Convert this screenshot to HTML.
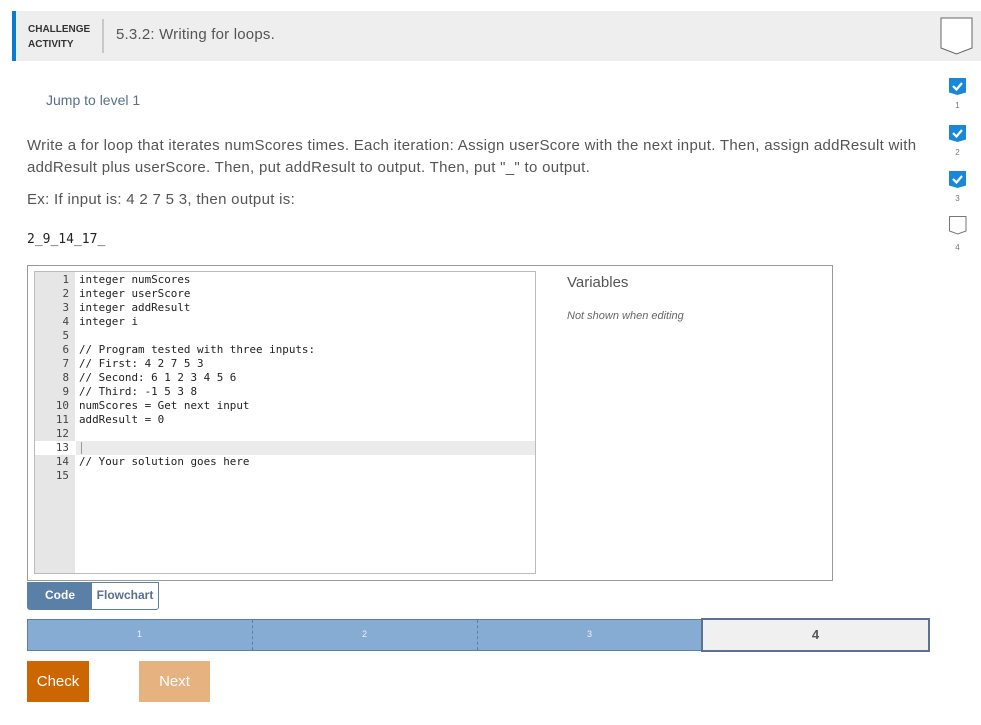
<!DOCTYPE html>
<html><head><style>
*{box-sizing:border-box;margin:0;padding:0}
body{width:981px;height:725px;background:#fff;font-family:"Liberation Sans",sans-serif;position:relative;overflow:hidden;color:#555}
.abs{position:absolute}
.hdr{left:12px;top:11px;width:969px;height:50px;background:#eeeeee;border-left:4px solid #0b7ad1}
.code{font-family:"DejaVu Sans Mono","Liberation Mono",monospace;font-size:10.9px;color:#222;line-height:14px;white-space:pre}
.chk{width:17px;height:17px;background:#1a88d8;clip-path:polygon(0 0,100% 0,100% 85%,50% 100%,0 85%)}
.chk svg{display:block}
.num{font-size:8px;color:#777;width:17px;text-align:center}
.desc{font-size:15px;letter-spacing:0.3px;color:#555}
</style></head><body>
<div class="abs hdr"></div>
<div class="abs" style="left:28px;top:22px;font-size:10px;font-weight:bold;color:#333;line-height:15px">CHALLENGE<br>ACTIVITY</div>
<div class="abs" style="left:102px;top:19px;width:2px;height:34px;background:#c8c8c8"></div>
<div class="abs" style="left:116px;top:26px;font-size:15px;letter-spacing:0.2px;color:#555">5.3.2: Writing for loops.</div>
<svg class="abs" style="left:940px;top:17px" width="34" height="38"><path d="M1 1H32V31L16.5 37L1 31Z" fill="#fff" stroke="#666" stroke-width="1"/></svg>

<div class="abs" style="left:46px;top:92px;font-size:14px;color:#5a6f8a">Jump to level 1</div>
<div class="abs desc" style="left:27px;top:135px;width:900px;line-height:22px">Write a for loop that iterates numScores times. Each iteration: Assign userScore with the next input. Then, assign addResult with addResult plus userScore. Then, put addResult to output. Then, put "_" to output.</div>
<div class="abs desc" style="left:27px;top:191px">Ex: If input is: 4 2 7 5 3, then output is:</div>
<div class="abs" style="left:27px;top:232px;font-size:13px;color:#222;font-family:'DejaVu Sans Mono',monospace">2_9_14_17_</div>

<div class="abs" style="left:949px;top:78px"><div class="chk"><svg width="17" height="15"><path d="M4 8L7.5 11.5L13 5" stroke="#fff" stroke-width="2.2" fill="none"/></svg></div><div class="num" style="margin-top:6px">1</div></div>
<div class="abs" style="left:949px;top:125px"><div class="chk"><svg width="17" height="15"><path d="M4 8L7.5 11.5L13 5" stroke="#fff" stroke-width="2.2" fill="none"/></svg></div><div class="num" style="margin-top:6px">2</div></div>
<div class="abs" style="left:949px;top:171px"><div class="chk"><svg width="17" height="15"><path d="M4 8L7.5 11.5L13 5" stroke="#fff" stroke-width="2.2" fill="none"/></svg></div><div class="num" style="margin-top:6px">3</div></div>
<svg class="abs" style="left:949px;top:216px" width="18" height="20"><path d="M0.5 0.5H17V15L8.75 18L0.5 15Z" fill="#fff" stroke="#777"/></svg>
<div class="abs num" style="left:949px;top:243px">4</div>

<div class="abs" style="left:27px;top:265px;width:806px;height:316px;border:1px solid #999"></div>
<div class="abs" style="left:34px;top:271px;width:502px;height:303px;border:1px solid #bbb;background:#fff"></div>
<div class="abs" style="left:35px;top:272px;width:40px;height:301px;background:#e6e6e6"></div>
<div class="abs" style="left:35px;top:441px;width:40px;height:14px;background:#fff"></div>
<div class="abs" style="left:76px;top:441px;width:459px;height:14px;background:#ebebeb"></div>
<div class="abs" style="left:81px;top:442px;width:1px;height:12px;background:#999"></div>
<div class="abs code" style="left:35px;top:273px;width:34px;text-align:right;color:#444">1
2
3
4
5
6
7
8
9
10
11
12
13
14
15</div>
<div class="abs code" style="left:79px;top:273px">integer numScores
integer userScore
integer addResult
integer i

// Program tested with three inputs:
// First: 4 2 7 5 3
// Second: 6 1 2 3 4 5 6
// Third: -1 5 3 8
numScores = Get next input
addResult = 0


// Your solution goes here
</div>
<div class="abs" style="left:567px;top:274px;font-size:15px;color:#555">Variables</div>
<div class="abs" style="left:567px;top:310px;font-size:11px;font-style:italic;color:#666">Not shown when editing</div>

<div class="abs" style="left:27px;top:582px;width:132px;height:28px;border:1px solid #5a80a8;border-radius:0 0 3px 3px;background:#fff"></div>
<div class="abs" style="left:28px;top:582px;width:64px;height:27px;background:#5a80a8;color:#fff;font-size:12px;font-weight:bold;text-align:center;line-height:26px">Code</div>
<div class="abs" style="left:92px;top:582px;width:66px;height:27px;color:#5a6f8a;font-size:12px;font-weight:bold;text-align:center;line-height:26px">Flowchart</div>

<div class="abs" style="left:27px;top:619px;width:675px;height:32px;background:#87acd3;border:1px solid #5a80a8"></div>
<div class="abs" style="left:252px;top:620px;height:30px;border-left:1px dashed #5a80a8"></div>
<div class="abs" style="left:477px;top:620px;height:30px;border-left:1px dashed #5a80a8"></div>
<div class="abs" style="left:27px;top:629px;width:225px;text-align:center;font-size:9px;color:#eef">1</div>
<div class="abs" style="left:252px;top:629px;width:225px;text-align:center;font-size:9px;color:#eef">2</div>
<div class="abs" style="left:477px;top:629px;width:225px;text-align:center;font-size:9px;color:#eef">3</div>
<div class="abs" style="left:701px;top:618px;width:229px;height:34px;background:#f0f0f0;border:2px solid #5a7394;text-align:center;line-height:30px;font-size:13px;font-weight:bold;color:#555">4</div>

<div class="abs" style="left:27px;top:661px;width:62px;height:41px;background:#cc6600;color:#fff;font-size:15px;text-align:center;line-height:41px">Check</div>
<div class="abs" style="left:139px;top:661px;width:71px;height:41px;background:#e6b280;color:#fff;font-size:15px;text-align:center;line-height:41px">Next</div>
</body></html>
